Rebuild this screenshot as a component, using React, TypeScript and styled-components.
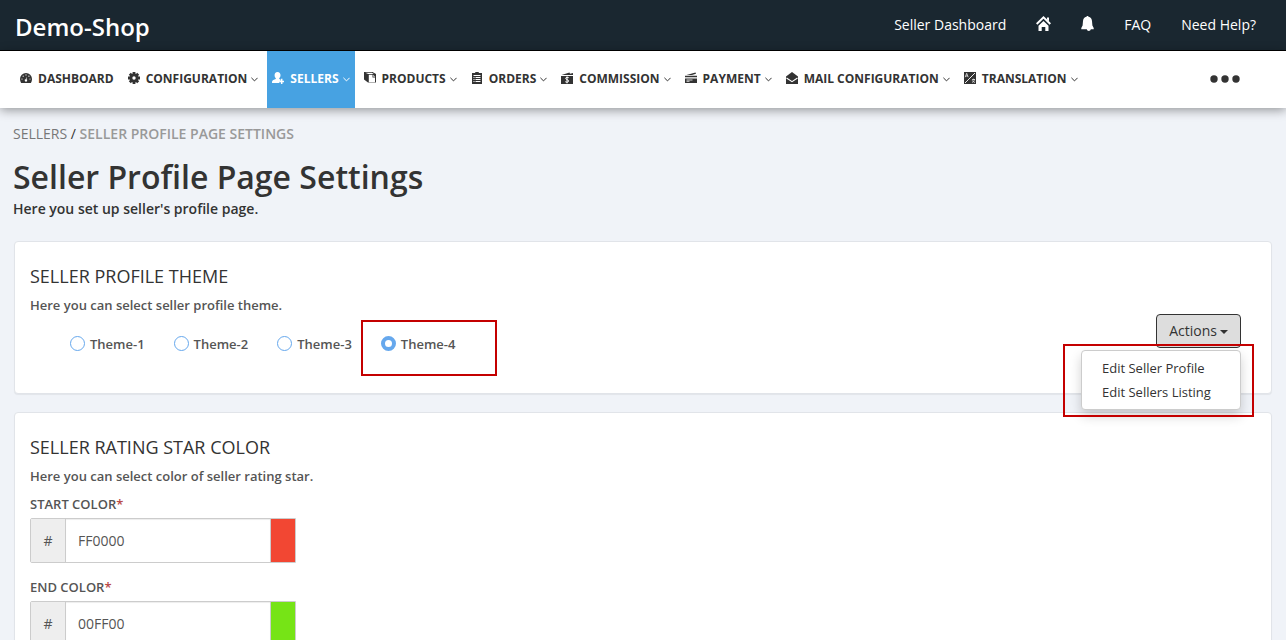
import React from "react";
import styled, { createGlobalStyle, css } from "styled-components";

const GlobalStyle = createGlobalStyle`
  *, *::before, *::after { box-sizing: border-box; }
  body {
    margin: 0;
    background: #f0f3f8;
    color: #333;
    font-family: "Open Sans", "Liberation Sans", sans-serif;
    font-size: 14px;
    line-height: 20px;
  }
`;

const TopBar = styled.header`
  display: flex;
  align-items: center;
  justify-content: space-between;
  height: 51px;
  padding: 0 30px 0 15px;
  background: #1a2730;
  border-bottom: 1px solid #000;
`;

const Brand = styled.a`
  padding-top: 4px;
  color: #fff;
  font-size: 24px;
  line-height: 32px;
  font-weight: 600;
  text-decoration: none;
`;

const TopLinks = styled.nav`
  display: flex;
  align-items: center;
  gap: 30px;
`;

const TopLink = styled.a`
  display: flex;
  color: #fff;
  text-decoration: none;

  svg { display: block; margin-bottom: 4px; }
`;

const MainNav = styled.nav`
  position: relative;
  display: flex;
  align-items: stretch;
  height: 57px;
  padding: 0 46px 0 15px;
  background: #fff;
  box-shadow: 0 2px 10px rgba(0, 0, 0, 0.4);
`;

const NavItems = styled.ul`
  display: flex;
  flex: 1;
  gap: 4px;
  margin: 0;
  padding: 0;
  list-style: none;
`;

const NavLink = styled.a<{ $active?: boolean }>`
  display: flex;
  align-items: center;
  height: 100%;
  padding: 0 5px 2px;
  color: ${(p) => (p.$active ? "#fff" : "#333")};
  background: ${(p) => (p.$active ? "#47a2e2" : "transparent")};
  font-size: 12px;
  font-weight: 700;
  text-decoration: none;
  white-space: nowrap;
`;

const NavIcon = styled.svg`
  width: 12px;
  height: 12px;
  margin: 0 6px 1px 0;
  flex: none;
`;

const Chevron = styled.svg`
  width: 7px;
  height: 5px;
  margin: 1px 0 0 4px;
  flex: none;
`;

const MoreButton = styled.button`
  padding: 0 0 2px;
  border: 0;
  background: none;
  color: #333;
`;

const Page = styled.main`
  padding: 16px 14px 0;
`;

const PageHead = styled.div`
  margin: 0 -1px 23px;
`;

const Breadcrumb = styled.nav`
  color: #333;

  a { color: #777; text-decoration: none; }
  span { color: #999; font-weight: 600; }
`;

const PageTitle = styled.h1`
  margin: 10px 0 0;
  font-size: 32px;
  line-height: 46px;
  font-weight: 600;
`;

const PageNote = styled.p`
  margin: 0;
  line-height: 18px;
  font-weight: 600;
`;

const Card = styled.section`
  margin-bottom: 18px;
  padding: 23px 30px 39px 15px;
  background: #fff;
  border: 1px solid #e1e4e9;
  border-radius: 4px;
  box-shadow: 0 1px 1px rgba(0, 0, 0, 0.06);
`;

const CardTitle = styled.h2`
  margin: 0;
  font-size: 18px;
  line-height: 22px;
  font-weight: 400;
  text-transform: uppercase;
`;

const CardNote = styled.p`
  margin: 8px 0 0;
  color: #555;
  font-size: 13px;
  line-height: 20px;
  font-weight: 600;
`;

const ThemeRow = styled.div`
  display: flex;
  justify-content: space-between;
  align-items: flex-start;
`;

const Themes = styled.fieldset`
  display: flex;
  gap: 29px;
  margin: 19px 0 0;
  padding: 0 0 0 40px;
  border: 0;
`;

const highlight = css`
  position: absolute;
  border: 2px solid #c40000;
  pointer-events: none;
  content: "";
`;

const ThemeOption = styled.label<{ $marked?: boolean }>`
  position: relative;
  display: flex;
  align-items: center;
  gap: 5px;
  color: #555;
  font-size: 13px;
  line-height: 20px;
  font-weight: 600;

  ${(p) =>
    p.$marked &&
    css`
      &::after {
        ${highlight}
        inset: -14px -42px -22px -20px;
      }
    `}
`;

const Radio = styled.input`
  appearance: none;
  width: 15px;
  height: 15px;
  margin: 0 0 2px;
  border: 1px solid #66a8ed;
  border-radius: 50%;
  background: #fff;

  &:checked { border-width: 4px; }
`;

const ActionsBox = styled.div`
  position: relative;
  margin-top: -1px;
`;

const ActionsButton = styled.button`
  display: flex;
  align-items: center;
  gap: 3px;
  height: 34px;
  padding: 0 12px;
  color: #333;
  background: #ddd;
  border: 1px solid #333;
  border-radius: 4px;
  font: inherit;
`;

const Caret = styled.span`
  margin-top: 2px;
  border: 4px solid transparent;
  border-top-color: #333;
  border-bottom: 0;
`;

const Menu = styled.ul`
  position: absolute;
  top: 36px;
  right: 0;
  width: 160px;
  margin: 0;
  padding: 5px 0;
  background: #fff;
  border: 1px solid #ccc;
  border-radius: 4px;
  box-shadow: 0 6px 12px rgba(0, 0, 0, 0.18);
  list-style: none;

  &::after {
    ${highlight}
    inset: -7px -14px -8px -19px;
  }
`;

const MenuLink = styled.a`
  display: block;
  padding: 2px 20px;
  color: #333;
  font-size: 13px;
  line-height: 20px;
  text-decoration: none;
  white-space: nowrap;
`;

const Field = styled.div`
  margin: 8px 0 14px;
  color: #555;
`;

const FieldLabel = styled.label`
  display: block;
  margin-bottom: 4px;
  font-size: 13px;
  line-height: 20px;
  font-weight: 600;
  text-transform: uppercase;

  em { color: #b94a48; font-style: normal; }
`;

const ColorGroup = styled.div`
  display: flex;
  width: 266px;
  height: 45px;
  border: 1px solid #ccc;
  border-radius: 2px 0 0 2px;
`;

const Hash = styled.span`
  display: flex;
  align-items: center;
  justify-content: center;
  width: 35px;
  background: #eee;
  border-right: 1px solid #ccc;
`;

const ColorInput = styled.input`
  flex: 1;
  min-width: 0;
  padding: 0 12px;
  color: #555;
  background: #fff;
  border: 0;
  border-right: 1px solid #ccc;
  box-shadow: inset 0 1px 1px rgba(0, 0, 0, 0.075);
  font: inherit;
`;

const Swatch = styled.span<{ $color: string }>`
  width: 24px;
  background: ${(p) => p.$color};
`;

const icons: Record<string, React.ReactNode> = {
  dashboard: (
    <>
      <path d="M6 1a6 6 0 0 0-6 6c0 1.500.4 2.700 1.100 4h9.800A7 7 0 0 0 12 7a6 6 0 0 0-6-6z" fill="currentColor" />
      <g fill="#fff">
        <circle cx="2" cy="7" r=".6" />
        <circle cx="3.200" cy="4.200" r=".6" />
        <circle cx="6" cy="2.900" r=".6" />
        <circle cx="8.900" cy="4.200" r=".6" />
        <circle cx="10" cy="7" r=".6" />
        <path d="M6.900 4.500 6.500 7.300a1.200 1.200 0 1 1-.8-.1z" />
      </g>
    </>
  ),
  gear: (
    <>
      <g stroke="currentColor" strokeWidth="2.800">
        <path d="M6 0v12M0 6h12M1.800 1.800l8.400 8.400M10.200 1.800l-8.400 8.400" />
      </g>
      <circle cx="6" cy="6" r="4.500" fill="currentColor" />
      <circle cx="6" cy="6" r="1.700" fill="#fff" />
    </>
  ),
  seller: (
    <>
      <path d="M5.500 0C3.600 0 2.500 1.300 2.600 3.200c0 1.300.5 2.300 1.200 2.900v.8L1.300 8C.3 8.500 0 9.200 0 11h7.300V9.400h1.200V7.400L7.200 6.900v-.8C7.900 5.500 8.500 4.500 8.500 3.200 8.600 1.300 7.400 0 5.500 0z" fill="currentColor" />
      <path d="M9.700 6.800V12M7.300 9.400H12" stroke="currentColor" strokeWidth="1.500" />
    </>
  ),
  products: (
    <>
      <path d="M0 0h8.500L12 2v8.500H4L0 7.500z" fill="currentColor" />
      <path d="M1.300.8h6.500l2 1.200H4.200zM4.800 2.800h3.700V5.500H11v4.800H4.800z" fill="#fff" />
      <path d="M9.300 2.800 11 4.700H9.300z" fill="#fff" />
    </>
  ),
  orders: (
    <>
      <path d="M1 1h3l.5-1h3L8 1h3v11H1z" fill="currentColor" />
      <path d="M2.500 3.500h7M2.500 5.500h1M4.500 5.500h5M2.500 7.500h1M4.500 7.500h5M2.500 9.500h1M4.500 9.500h5" stroke="#fff" />
    </>
  ),
  commission: (
    <>
      <path d="M0 4h12v8H0zM.5 3l8-2.600.5 1.400L12 .900V3z" fill="currentColor" />
      <path d="M7.700 5.700c-.6-.5-3-.7-3 .7S7.600 7.500 7.600 9s-2.600 1.400-3.300.7M6 4.500v6.800" fill="none" stroke="#fff" />
    </>
  ),
  payment: (
    <>
      <path d="M1.500 3 10.500.4 11 1.700 7 3zM0 3.700h12v1.600H0zM0 6.500h12V11H0z" fill="currentColor" />
      <path d="M1.500 8h6M1.500 9.300h3" stroke="#fff" strokeWidth=".8" />
    </>
  ),
  mail: (
    <>
      <path d="M6 0 0 4.500V12h12V4.500z" fill="currentColor" />
      <path d="M.5 6 6 9.700 11.500 6" fill="none" stroke="#fff" strokeWidth="1.100" />
    </>
  ),
  translation: (
    <>
      <path d="M0 0h12v12H0z" fill="currentColor" />
      <path d="M1 11 11 1" stroke="#fff" strokeWidth=".9" />
      <path d="M1.200 5.200 2.700 1.300l1.500 3.900M1.700 4h2M8 7.500h3M9.500 6.700v.8M10.500 7.500C10.200 9 9 10 8 10.500M8.300 8.400c.5 1 1.500 1.700 2.700 2.100" fill="none" stroke="#fff" strokeWidth=".7" />
    </>
  ),
};

const navItems = [
  { label: "DASHBOARD", icon: "dashboard", plain: true },
  { label: "CONFIGURATION", icon: "gear" },
  { label: "SELLERS", icon: "seller", active: true },
  { label: "PRODUCTS", icon: "products" },
  { label: "ORDERS", icon: "orders" },
  { label: "COMMISSION", icon: "commission" },
  { label: "PAYMENT", icon: "payment" },
  { label: "MAIL CONFIGURATION", icon: "mail" },
  { label: "TRANSLATION", icon: "translation" },
];

const colorFields = [
  { id: "start-color", label: "Start Color", value: "FF0000", swatch: "#f24733" },
  { id: "end-color", label: "End Color", value: "00FF00", swatch: "#76e416" },
];

const themes = ["Theme-1", "Theme-2", "Theme-3", "Theme-4"];

export default function App() {
  return (
    <>
      <GlobalStyle />
      <TopBar>
        <Brand href="#">Demo-Shop</Brand>
        <TopLinks aria-label="Account">
          <TopLink href="#">Seller Dashboard</TopLink>
          <TopLink href="#" aria-label="Home">
            <svg width="15" height="15" viewBox="0 0 15 15">
              <path d="M.7 8 7.500 1.400 14.300 8" fill="none" stroke="#fff" strokeWidth="2" />
              <path d="M11 1.500h2v4l-2-2zM7.500 5l5 4.800V15H9.300v-4H5.700v4H2.500V9.800z" fill="#fff" />
            </svg>
          </TopLink>
          <TopLink href="#" aria-label="Notifications">
            <svg width="13" height="15" viewBox="0 0 13 15">
              <path d="M6.500 0C5.800 0 5.500.4 5.500.8 3.200 1.200 2.200 3 2 5L1.600 9.500.3 12v1.300h12.400V12l-1.300-2.500L11 5C10.800 3 9.800 1.200 7.500.8c0-.4-.3-.8-1-.8zM5.800 13.300h4c-.2 1-1 1.700-2 1.700s-1.800-.7-2-1.700z" fill="#fff" />
            </svg>
          </TopLink>
          <TopLink href="#">FAQ</TopLink>
          <TopLink href="#">Need Help?</TopLink>
        </TopLinks>
      </TopBar>

      <MainNav aria-label="Main">
        <NavItems>
          {navItems.map((item) => (
            <li key={item.label}>
              <NavLink href="#" $active={item.active}>
                <NavIcon viewBox="0 0 12 12" aria-hidden="true">{icons[item.icon]}</NavIcon>
                {item.label}
                {!item.plain && (
                  <Chevron viewBox="0 0 7 5" aria-hidden="true">
                    <path d="M.4.800 3.500 3.900 6.600.800" fill="none" stroke="currentColor" />
                  </Chevron>
                )}
              </NavLink>
            </li>
          ))}
        </NavItems>
        <MoreButton aria-label="More">
          <svg width="30" height="8" viewBox="0 0 30 8" fill="currentColor">
            <circle cx="4" cy="4" r="3.700" />
            <circle cx="15" cy="4" r="3.700" />
            <circle cx="26" cy="4" r="3.700" />
          </svg>
        </MoreButton>
      </MainNav>

      <Page>
        <PageHead>
          <Breadcrumb aria-label="Breadcrumb">
            <a href="#">SELLERS</a> / <span>SELLER PROFILE PAGE SETTINGS</span>
          </Breadcrumb>
          <PageTitle>Seller Profile Page Settings</PageTitle>
          <PageNote>Here you set up seller's profile page.</PageNote>
        </PageHead>

        <Card>
          <CardTitle>Seller Profile Theme</CardTitle>
          <CardNote>Here you can select seller profile theme.</CardNote>
          <ThemeRow>
            <Themes aria-label="Seller profile theme">
              {themes.map((name) => (
                <ThemeOption key={name} $marked={name === "Theme-4"}>
                  <Radio type="radio" name="theme" defaultChecked={name === "Theme-4"} />
                  {name}
                </ThemeOption>
              ))}
            </Themes>
            <ActionsBox>
              <ActionsButton aria-expanded="true">
                Actions
                <Caret />
              </ActionsButton>
              <Menu>
                <li><MenuLink href="#">Edit Seller Profile</MenuLink></li>
                <li><MenuLink href="#">Edit Sellers Listing</MenuLink></li>
              </Menu>
            </ActionsBox>
          </ThemeRow>
        </Card>

        <Card>
          <CardTitle>Seller Rating Star Color</CardTitle>
          <CardNote>Here you can select color of seller rating star.</CardNote>
          {colorFields.map((field) => (
            <Field key={field.id}>
              <FieldLabel htmlFor={field.id}>
                {field.label}
                <em>*</em>
              </FieldLabel>
              <ColorGroup>
                <Hash>#</Hash>
                <ColorInput id={field.id} defaultValue={field.value} />
                <Swatch $color={field.swatch} />
              </ColorGroup>
            </Field>
          ))}
        </Card>
      </Page>
    </>
  );
}
